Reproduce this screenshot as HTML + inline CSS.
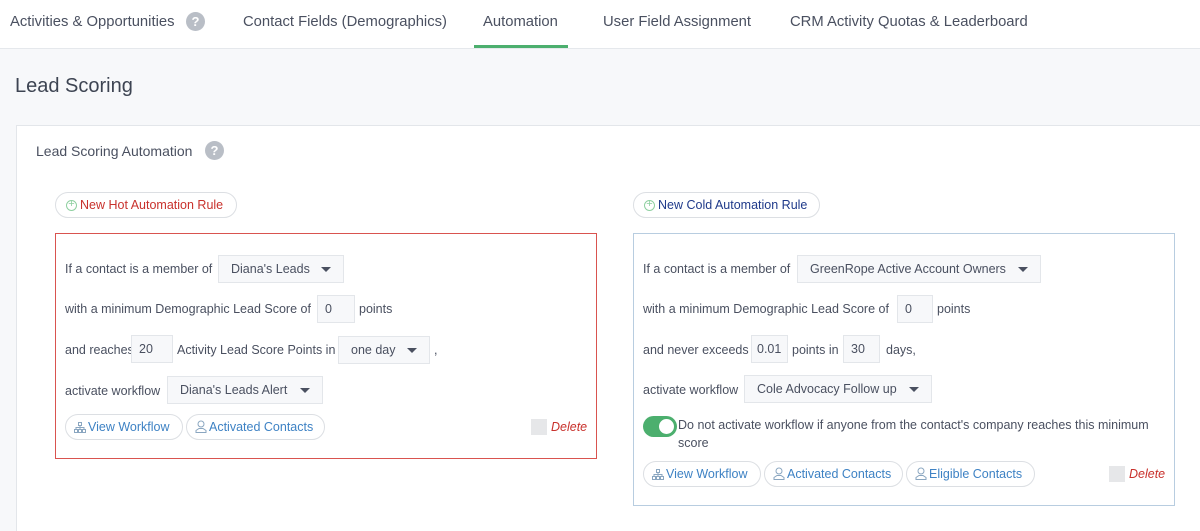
<!DOCTYPE html>
<html><head><style>
*{margin:0;padding:0;box-sizing:border-box}
html,body{width:1200px;height:531px;overflow:hidden}
body{background:#f7f8fa;font-family:"Liberation Sans",sans-serif;color:#4a5060;font-size:12.5px;position:relative}
.a{position:absolute;white-space:nowrap}
.nav{position:absolute;left:0;top:0;width:1200px;height:49px;background:#fff;border-bottom:1px solid #e5e8ec}
.tab{position:absolute;top:14px;font-size:14.8px;color:#4a5060}
.q{position:absolute;width:19px;height:19px;border-radius:50%;background:#b9bec6;color:#fff;font-weight:bold;font-size:13px;text-align:center;line-height:19px}
.card{position:absolute;left:16px;top:125px;width:1184px;height:406px;background:#fff;border:1px solid #e3e6ea;border-right:none;border-bottom:none}
.box{position:absolute;background:#fff}
.sel{position:absolute;background:#f7f8fa;border:1px solid #e3e6ea;height:28px;line-height:26px;padding-left:12px;color:#4a5060}
.sel:after{content:"";position:absolute;right:12px;top:11px;border-left:5px solid transparent;border-right:5px solid transparent;border-top:5px solid #4a5060}
.inp{position:absolute;background:#f7f8fa;border:1px solid #e3e6ea;height:28px;line-height:26px;padding-left:7px}
.btn{position:absolute;height:26px;border:1px solid #dcdfe3;border-radius:13px;line-height:24px;color:#3e82c4;padding-left:8px;background:#fff}
.btn svg{vertical-align:-2px;margin-right:2px}
.pill{position:absolute;height:26px;border:1px solid #dcdfe3;border-radius:13px;line-height:24px;padding-left:24px;background:#fff}
.pill:before{content:"";position:absolute;left:10px;top:7px;width:9px;height:9px;border:1px solid #8fd0a0;border-radius:50%}
.pill:after{content:"+";position:absolute;left:11px;top:-1px;color:#8fd0a0;font-size:11px;width:9px;text-align:center}
.cb{position:absolute;width:16px;height:16px;background:#e6e7e9}
.del{position:absolute;color:#c8312c;font-style:italic}
</style></head><body>
<div class="nav">
<span class="tab" style="left:10px">Activities &amp; Opportunities</span>
<div class="q" style="left:186px;top:12px">?</div>
<span class="tab" style="left:243px">Contact Fields (Demographics)</span>
<span class="tab" style="left:483px">Automation</span>
<div class="a" style="left:474px;top:45px;width:94px;height:3px;background:#4caf6e"></div>
<span class="tab" style="left:603px">User Field Assignment</span>
<span class="tab" style="left:790px">CRM Activity Quotas &amp; Leaderboard</span>
</div>
<div class="a" style="left:15px;top:75px;font-size:20px;color:#3d4452">Lead Scoring</div>
<div class="card"></div>
<div class="a" style="left:36px;top:143px;font-size:14px">Lead Scoring Automation</div>
<div class="q" style="left:205px;top:141px">?</div>

<div class="pill" style="left:55px;top:192px;width:182px;color:#c8312c">New Hot Automation Rule</div>
<div class="pill" style="left:633px;top:192px;width:187px;color:#1f3a8a">New Cold Automation Rule</div>

<div class="box" style="left:55px;top:233px;width:542px;height:226px;border:1px solid #d9534f"></div>
<div class="a" style="left:65px;top:262px">If a contact is a member of</div>
<div class="sel" style="left:218px;top:255px;width:126px">Diana's Leads</div>
<div class="a" style="left:65px;top:302px">with a minimum Demographic Lead Score of</div>
<div class="inp" style="left:317px;top:295px;width:38px">0</div>
<div class="a" style="left:359px;top:302px">points</div>
<div class="a" style="left:65px;top:343px">and reaches</div>
<div class="inp" style="left:131px;top:335px;width:42px">20</div>
<div class="a" style="left:177px;top:343px">Activity Lead Score Points in</div>
<div class="sel" style="left:338px;top:336px;width:92px">one day</div>
<div class="a" style="left:434px;top:343px">,</div>
<div class="a" style="left:65px;top:384px">activate workflow</div>
<div class="sel" style="left:167px;top:376px;width:156px">Diana's Leads Alert</div>
<div class="btn" style="left:65px;top:414px;width:118px"><svg width="12" height="11" viewBox="0 0 12 11" fill="none" stroke="#8aa6c0"><rect x="4.5" y="0.5" width="3" height="3"/><rect x="0.5" y="7.5" width="3" height="3"/><rect x="4.5" y="7.5" width="3" height="3"/><rect x="8.5" y="7.5" width="3" height="3"/><path d="M6 3.5V7.5M2 7.5V5.5H10V7.5"/></svg>View Workflow</div>
<div class="btn" style="left:186px;top:414px;width:139px"><svg width="12" height="13" viewBox="0 0 12 13" fill="none" stroke="#8aa6c0"><circle cx="6" cy="4" r="3"/><path d="M1 12.5V10.5L4 8.5H8L11 10.5V12.5Z"/></svg>Activated Contacts</div>
<div class="cb" style="left:531px;top:419px"></div>
<div class="del" style="left:551px;top:420px">Delete</div>

<div class="box" style="left:633px;top:233px;width:542px;height:273px;border:1px solid #b8cde0"></div>
<div class="a" style="left:643px;top:262px">If a contact is a member of</div>
<div class="sel" style="left:797px;top:255px;width:244px">GreenRope Active Account Owners</div>
<div class="a" style="left:643px;top:302px">with a minimum Demographic Lead Score of</div>
<div class="inp" style="left:897px;top:295px;width:36px">0</div>
<div class="a" style="left:937px;top:302px">points</div>
<div class="a" style="left:643px;top:343px">and never exceeds</div>
<div class="inp" style="left:751px;top:335px;width:37px;padding-left:5px">0.01</div>
<div class="a" style="left:792px;top:343px">points in</div>
<div class="inp" style="left:843px;top:335px;width:37px">30</div>
<div class="a" style="left:886px;top:343px">days,</div>
<div class="a" style="left:643px;top:383px">activate workflow</div>
<div class="sel" style="left:744px;top:375px;width:188px">Cole Advocacy Follow up</div>
<div class="a" style="left:643px;top:416px;width:34px;height:21px;border-radius:11px;background:#4caf6e"></div>
<div class="a" style="left:659px;top:419px;width:15px;height:15px;border-radius:50%;background:#fff"></div>
<div class="a" style="left:678px;top:418px">Do not activate workflow if anyone from the contact's company reaches this minimum</div>
<div class="a" style="left:678px;top:436px">score</div>
<div class="btn" style="left:643px;top:461px;width:118px"><svg width="12" height="11" viewBox="0 0 12 11" fill="none" stroke="#8aa6c0"><rect x="4.5" y="0.5" width="3" height="3"/><rect x="0.5" y="7.5" width="3" height="3"/><rect x="4.5" y="7.5" width="3" height="3"/><rect x="8.5" y="7.5" width="3" height="3"/><path d="M6 3.5V7.5M2 7.5V5.5H10V7.5"/></svg>View Workflow</div>
<div class="btn" style="left:764px;top:461px;width:139px"><svg width="12" height="13" viewBox="0 0 12 13" fill="none" stroke="#8aa6c0"><circle cx="6" cy="4" r="3"/><path d="M1 12.5V10.5L4 8.5H8L11 10.5V12.5Z"/></svg>Activated Contacts</div>
<div class="btn" style="left:906px;top:461px;width:129px"><svg width="12" height="13" viewBox="0 0 12 13" fill="none" stroke="#8aa6c0"><circle cx="6" cy="4" r="3"/><path d="M1 12.5V10.5L4 8.5H8L11 10.5V12.5Z"/></svg>Eligible Contacts</div>
<div class="cb" style="left:1109px;top:466px"></div>
<div class="del" style="left:1129px;top:467px">Delete</div>
</body></html>
